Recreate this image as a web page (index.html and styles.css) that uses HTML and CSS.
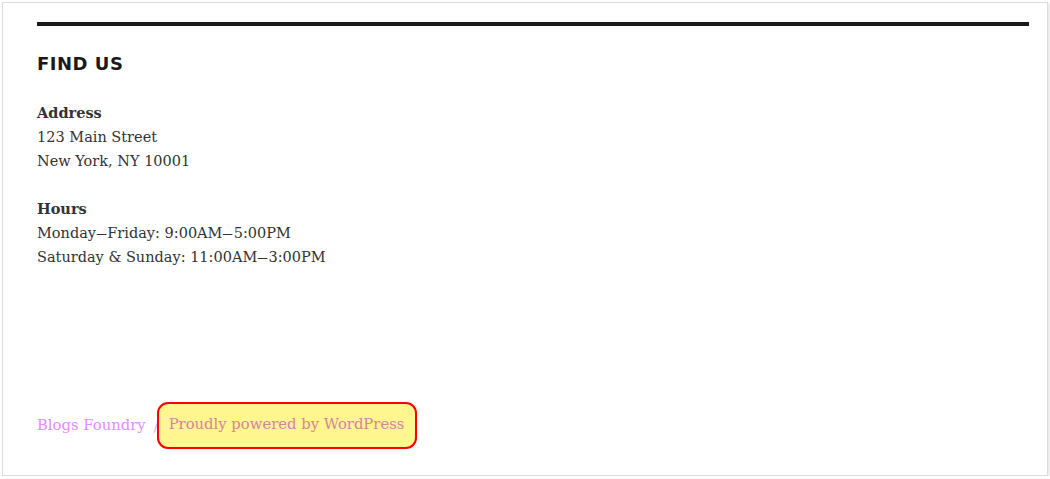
FILE: index.html
```html
<!DOCTYPE html>
<html>
<head>
<meta charset="utf-8">
<link rel="stylesheet" href="styles.css">
</head>
<body>
<div class="frame">
  <section class="widget">
    <div class="rule"></div>
    <h2 class="widget-title">FIND US</h2>
    <p class="info"><strong>Address</strong><br>123 Main Street<br>New York, NY 10001</p>
    <p class="info"><strong>Hours</strong><br>Monday<span class="dash">&ndash;</span>Friday: 9:00AM<span class="dash">&ndash;</span>5:00PM<br>Saturday &amp; Sunday: 11:00AM<span class="dash">&ndash;</span>3:00PM</p>
  </section>
  <footer class="site-info">
    <a class="site-name">Blogs Foundry</a>
    <span class="sep">/</span>
    <a class="powered">Proudly powered by WordPress</a>
  </footer>
</div>
</body>
</html>
```
FILE: styles.css
```css
html, body {
  margin: 0;
  padding: 0;
  background: #ffffff;
}
.frame {
  margin: 2px 0 0 2px;
  width: 1044px;
  height: 472px;
  border: 1px solid #dcdcdc;
  box-shadow: 1px 1px 2px rgba(0,0,0,0.12);
  display: flex;
  flex-direction: column;
  font-family: "DejaVu Serif", serif;
  color: #333333;
}
.widget {
  padding: 19px 18px 0 34px;
}
.rule {
  height: 4px;
  background: #1a1a1a;
}
.widget-title {
  margin: 26px 0 0 0;
  font-family: "DejaVu Sans", sans-serif;
  font-weight: bold;
  font-size: 18px;
  letter-spacing: 0.5px;
  line-height: 24px;
  color: #1a1a1a;
}
.info {
  margin: 25px 0 0 0;
  font-size: 14.5px;
  line-height: 24px;
}
.info + .info {
  margin-top: 24px;
}
.info strong {
  font-weight: bold;
  color: #333;
}
.dash {
  display: inline-block;
  padding: 0 2px;
  transform: scaleX(1.6);
}
.site-info {
  margin-top: auto;
  padding: 0 0 26px 34px;
  display: flex;
  align-items: center;
  font-size: 14.8px;
  line-height: 24px;
}
.site-name {
  color: #e58bff;
  position: relative;
  top: -1px;
}
.sep {
  color: #e6a6f7;
  margin: 0 -2px 0 8px;
}
.powered {
  color: #d9849a;
  background: #fff68f;
  border: 2px solid #ff0000;
  border-radius: 11px;
  padding: 8px 11px 11px 10px;
  position: relative;
}
```
